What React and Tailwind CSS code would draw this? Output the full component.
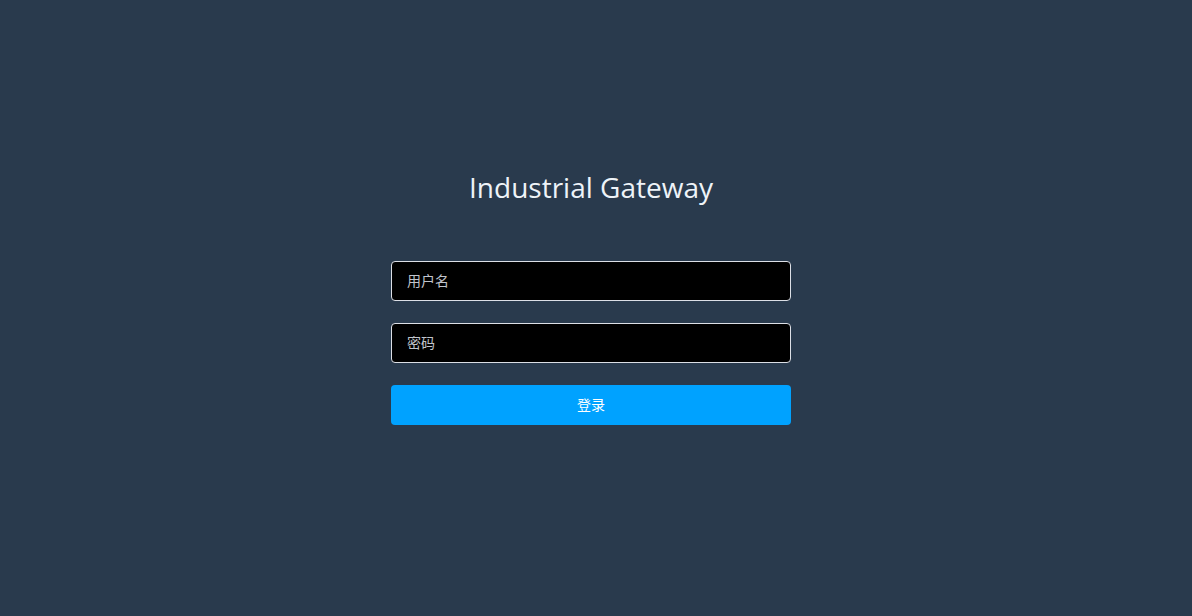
export default function App() {
  return (
    <div className="w-full h-[616px] bg-[#293a4d] flex flex-col items-center pr-[10px] font-['Open_Sans','Noto_Sans_CJK_SC',sans-serif]">
      <h1 className="mt-[167px] text-[28px] leading-[40px] text-[#eef3f8] font-normal">Industrial Gateway</h1>
      <div className="mt-[54px] w-[400px] flex flex-col font-['Noto_Sans_CJK_SC',sans-serif]">
        <input
          className="h-[40px] w-full bg-black border border-[#dcdfe6] rounded-[4px] px-[15px] pb-[2px] text-[14px] text-white placeholder:text-[#c0c4cc] outline-none"
          placeholder="用户名"
        />
        <input
          type="password"
          className="mt-[22px] h-[40px] w-full bg-black border border-[#dcdfe6] rounded-[4px] px-[15px] pb-[2px] text-[14px] text-white placeholder:text-[#c0c4cc] outline-none"
          placeholder="密码"
        />
        <button className="mt-[22px] h-[40px] w-full bg-[#00a2ff] rounded-[4px] text-white text-[14px] pb-[2px]">
          登录
        </button>
      </div>
    </div>
  );
}
